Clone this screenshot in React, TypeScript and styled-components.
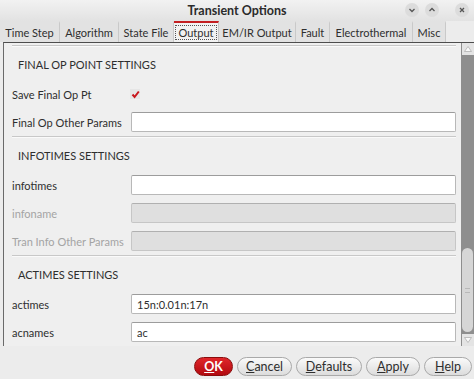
import styled, { createGlobalStyle } from 'styled-components';

const GlobalStyle = createGlobalStyle`
  html, body {
    margin: 0;
    padding: 0;
    background: #ececec;
    font-family: Lato, 'Open Sans', sans-serif;
  }
`;

const Window = styled.div`
  width: 474px;
  height: 379px;
  display: flex;
  flex-direction: column;
  background: #ececec;
  overflow: hidden;
  color: #2e2e2e;
  font-size: 11px;
`;

const TitleBar = styled.div`
  height: 21px;
  position: relative;
  display: flex;
  align-items: center;
  justify-content: center;
  background: linear-gradient(#f2f2f2, #e2e2e2);
`;

const Title = styled.div`
  font-weight: 700;
  font-size: 12.5px;
  color: #2b2b2b;
`;

const Controls = styled.div`
  position: absolute;
  right: 5px;
  top: 3px;
  display: flex;
  gap: 6px;
`;

const CtrlButton = styled.div<{ $gapBefore?: boolean }>`
  width: 14px;
  height: 14px;
  border-radius: 50%;
  background: #dcdcdc;
  display: flex;
  align-items: center;
  justify-content: center;
  margin-left: ${(p) => (p.$gapBefore ? '10px' : '0')};
`;

const TabBar = styled.div`
  height: 21px;
  display: flex;
  align-items: stretch;
  background: #ececec;
`;

const Tab = styled.div<{ $active?: boolean; $w: number }>`
  width: ${(p) => p.$w}px;
  box-sizing: border-box;
  display: flex;
  align-items: center;
  justify-content: center;
  background: ${(p) => (p.$active ? '#f2f2f2' : '#e2e2e2')};
  border-right: 1px solid #c9c9c9;
  color: #2e2e2e;
  white-space: nowrap;
  font-size: 11px;
  border-top: 2px solid ${(p) => (p.$active ? '#c41f22' : 'transparent')};
`;

const FocusLabel = styled.span`
  outline: 1px dotted #555;
  padding: 0 2px;
`;

const Panel = styled.div`
  height: 303px;
  margin-left: 3px;
  border-top: 1px solid #4d4d4d;
  border-left: 1px solid #6a6a6a;
  display: flex;
  background: #efefef;
`;

const Content = styled.div`
  flex: 1;
  overflow: hidden;
  padding: 2px 5px 0 8px;
`;

const Divider = styled.div`
  height: 1px;
  background: #c8c8c8;
  border-bottom: 1px solid #fafafa;
`;

const Section = styled.div``;

const SectionTitle = styled.div`
  padding: 10px 0 7px 6px;
  line-height: 16px;
  font-size: 11px;
  color: #2e2e2e;
`;

const Row = styled.div`
  height: 28px;
  display: grid;
  grid-template-columns: 119px 1fr;
  align-items: center;
`;

const Label = styled.div<{ $disabled?: boolean }>`
  color: ${(p) => (p.$disabled ? '#a4a4a4' : '#2e2e2e')};
  white-space: nowrap;
`;

const Input = styled.div<{ $disabled?: boolean }>`
  height: 18px;
  border: 1px solid ${(p) => (p.$disabled ? '#c6c6c6' : '#b8b8b8')};
  border-top-color: ${(p) => (p.$disabled ? '#b0b0b0' : '#9c9c9c')};
  border-radius: 2px;
  background: ${(p) => (p.$disabled ? '#dfdfdf' : '#ffffff')};
  display: flex;
  align-items: center;
  padding: 0 5px;
  color: #2e2e2e;
`;

const Check = styled.div`
  width: 10px;
  height: 10px;
  margin-left: -1px;
  background: #e6e6e6;
  display: flex;
  align-items: center;
  justify-content: center;
`;

const Scrollbar = styled.div`
  width: 13px;
  background: #8e8e8e;
  display: flex;
  flex-direction: column;
  align-items: center;
`;

const Arrow = styled.div`
  width: 12px;
  height: 12px;
  background: #e4e4e4;
  display: flex;
  align-items: center;
  justify-content: center;
`;

const Track = styled.div`
  flex: 1;
  width: 100%;
  display: flex;
  flex-direction: column;
  justify-content: flex-end;
  align-items: center;
  padding-bottom: 2px;
`;

const Thumb = styled.div`
  width: 11px;
  height: 84px;
  border-radius: 6px;
  background: #d6d6d6;
  display: flex;
  align-items: center;
  justify-content: center;
`;

const Grip = styled.div`
  width: 5px;
  height: 5px;
  border-top: 1px solid #b8b8b8;
  border-bottom: 1px solid #b8b8b8;
  box-sizing: border-box;
`;

const ButtonBar = styled.div`
  flex: 1;
  display: flex;
  justify-content: flex-end;
  align-items: flex-start;
  padding: 11px 2px 0 0;
  gap: 4px;
`;

const Button = styled.div<{ $primary?: boolean; $w: number }>`
  width: ${(p) => p.$w}px;
  height: 19px;
  box-sizing: border-box;
  border-radius: 10px;
  display: flex;
  align-items: center;
  justify-content: center;
  font-size: 12.5px;
  border: 1px solid ${(p) => (p.$primary ? '#8a0c0c' : '#a9a9a9')};
  background: ${(p) =>
    p.$primary
      ? 'linear-gradient(#e0262a, #b20a10)'
      : 'linear-gradient(#fafafa, #dcdcdc)'};
  color: ${(p) => (p.$primary ? '#ffffff' : '#2e2e2e')};
  font-weight: ${(p) => (p.$primary ? 700 : 400)};
`;

const Mn = styled.span`
  text-decoration: underline;
`;

const tabs: [string, number][] = [
  ['Time Step', 60],
  ['Algorithm', 59],
  ['State File', 55],
  ['Output', 45],
  ['EM/IR Output', 77],
  ['Fault', 34],
  ['Electrothermal', 83],
  ['Misc', 33],
];

const App = () => {
  return (
    <>
      <GlobalStyle />
      <Window>
        <TitleBar>
          <Title>Transient Options</Title>
          <Controls>
            <CtrlButton>
              <svg width="8" height="8" viewBox="0 0 8 8">
                <path d="M1.5 3 L4 5.5 L6.5 3" fill="none" stroke="#555" strokeWidth="1.3" />
              </svg>
            </CtrlButton>
            <CtrlButton>
              <svg width="8" height="8" viewBox="0 0 8 8">
                <path d="M1.5 5 L4 2.5 L6.5 5" fill="none" stroke="#555" strokeWidth="1.3" />
              </svg>
            </CtrlButton>
            <CtrlButton $gapBefore>
              <svg width="8" height="8" viewBox="0 0 8 8">
                <path d="M2 2 L6 6 M6 2 L2 6" fill="none" stroke="#555" strokeWidth="1.3" />
              </svg>
            </CtrlButton>
          </Controls>
        </TitleBar>
        <TabBar>
          {tabs.map(([t, w]) => (
            <Tab key={t} $w={w} $active={t === 'Output'}>
              {t === 'Output' ? <FocusLabel>{t}</FocusLabel> : t}
            </Tab>
          ))}
        </TabBar>
        <Panel>
          <Content>
            <Divider />
            <Section>
              <SectionTitle>FINAL OP POINT SETTINGS</SectionTitle>
              <Row>
                <Label>Save Final Op Pt</Label>
                <Check>
                  <svg width="9" height="9" viewBox="0 0 9 9">
                    <path d="M1.5 4.5 L3.6 7 L7.8 1.5" fill="none" stroke="#c8161c" strokeWidth="2" />
                  </svg>
                </Check>
              </Row>
              <Row>
                <Label>Final Op Other Params</Label>
                <Input />
              </Row>
            </Section>
            <Divider />
            <Section>
              <SectionTitle>INFOTIMES SETTINGS</SectionTitle>
              <Row>
                <Label>infotimes</Label>
                <Input />
              </Row>
              <Row>
                <Label $disabled>infoname</Label>
                <Input $disabled />
              </Row>
              <Row>
                <Label $disabled>Tran Info Other Params</Label>
                <Input $disabled />
              </Row>
            </Section>
            <Divider />
            <Section>
              <SectionTitle>ACTIMES SETTINGS</SectionTitle>
              <Row>
                <Label>actimes</Label>
                <Input>15n:0.01n:17n</Input>
              </Row>
              <Row>
                <Label>acnames</Label>
                <Input>ac</Input>
              </Row>
            </Section>
          </Content>
          <Scrollbar>
            <Arrow>
              <svg width="8" height="6" viewBox="0 0 8 6">
                <path d="M0.5 5.5 L4 0.5 L7.5 5.5 Z" fill="#fafafa" stroke="#b0b0b0" strokeWidth="0.8" />
              </svg>
            </Arrow>
            <Track>
              <Thumb>
                <Grip />
              </Thumb>
            </Track>
            <Arrow>
              <svg width="8" height="6" viewBox="0 0 8 6">
                <path d="M0.5 0.5 L4 5.5 L7.5 0.5 Z" fill="#fafafa" stroke="#b0b0b0" strokeWidth="0.8" />
              </svg>
            </Arrow>
          </Scrollbar>
        </Panel>
        <ButtonBar>
          <Button $primary $w={39}>
            <Mn>O</Mn>K
          </Button>
          <Button $w={55}>
            <Mn>C</Mn>ancel
          </Button>
          <Button $w={66}>
            <Mn>D</Mn>efaults
          </Button>
          <Button $w={54}>
            <Mn>A</Mn>pply
          </Button>
          <Button $w={48}>
            <Mn>H</Mn>elp
          </Button>
        </ButtonBar>
      </Window>
    </>
  );
};

export default App;
